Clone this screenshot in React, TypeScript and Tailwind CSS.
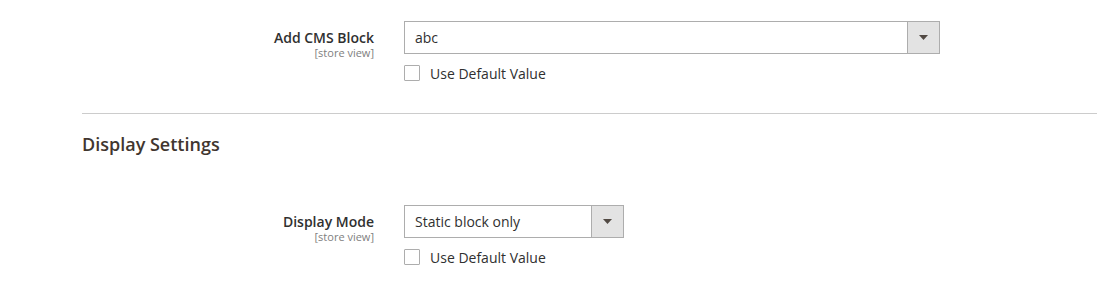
import React from 'react';

const font = { fontFamily: '"Open Sans", "Noto Sans", sans-serif' };

function SelectBox({ value, width }: { value: string; width: string }) {
  return (
    <div className={`flex h-[33px] ${width} border border-[#adadad] bg-white`}>
      <div className="flex-1 flex items-center pl-[10px] text-[14px] text-[#303030]">{value}</div>
      <div className="w-[32px] border-l border-[#adadad] bg-[#e3e3e3] flex items-center justify-center">
        <svg width="9" height="5" viewBox="0 0 9 5">
          <path d="M0 0h9L4.5 5z" fill="#514943" />
        </svg>
      </div>
    </div>
  );
}

function FieldRow({ label, value, width }: { label: string; value: string; width: string }) {
  return (
    <div className="flex">
      <div className="w-[292px] text-right pt-[7px]">
        <div className="text-[14px] leading-[19px] font-semibold text-[#303030]">{label}</div>
        <div className="text-[11px] leading-[12px] text-[#808080]">[store view]</div>
      </div>
      <div className="ml-[30px]">
        <SelectBox value={value} width={width} />
        <label className="flex items-center mt-[11px] h-[16px]">
          <span className="w-[16px] h-[16px] border border-[#adadad] rounded-[1px] bg-white" />
          <span className="ml-[10px] text-[14px] text-[#303030]">Use Default Value</span>
        </label>
      </div>
    </div>
  );
}

export default function App() {
  return (
    <div className="w-[1097px] h-[283px] bg-white pl-[82px] pt-[21px]" style={font}>
      <FieldRow label="Add CMS Block" value="abc" width="w-[536px]" />
      <div className="mt-[32px] h-px bg-[#cccccc]" />
      <div className="mt-[19px] text-[18px] leading-[23px] font-semibold text-[#41362f]">Display Settings</div>
      <div className="mt-[49px]">
        <FieldRow label="Display Mode" value="Static block only" width="w-[220px]" />
      </div>
    </div>
  );
}
